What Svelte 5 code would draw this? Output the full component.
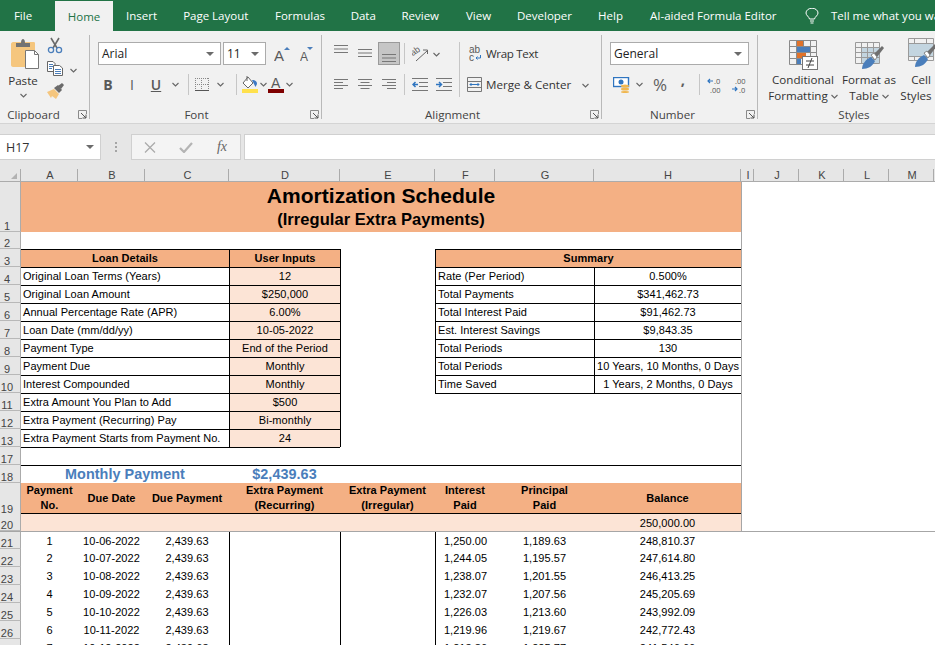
<script lang="ts">
	const tabs = ['File', 'Home', 'Insert', 'Page Layout', 'Formulas', 'Data', 'Review', 'View', 'Developer', 'Help', 'AI-aided Formula Editor'];

	const colHeads = ['A', 'B', 'C', 'D', 'E', 'F', 'G', 'H', 'I', 'J', 'K', 'L', 'M'];

	const loan = [
		['Original Loan Terms (Years)', '12'],
		['Original Loan Amount', '$250,000'],
		['Annual Percentage Rate (APR)', '6.00%'],
		['Loan Date (mm/dd/yy)', '10-05-2022'],
		['Payment Type', 'End of the Period'],
		['Payment Due', 'Monthly'],
		['Interest Compounded', 'Monthly'],
		['Extra Amount You Plan to Add', '$500'],
		['Extra Payment (Recurring) Pay', 'Bi-monthly'],
		['Extra Payment Starts from Payment No.', '24']
	];

	const summary = [
		['Rate (Per Period)', '0.500%'],
		['Total Payments', '$341,462.73'],
		['Total Interest Paid', '$91,462.73'],
		['Est. Interest Savings', '$9,843.35'],
		['Total Periods', '130'],
		['Total Periods', '10 Years, 10 Months, 0 Days'],
		['Time Saved', '1 Years, 2 Months, 0 Days']
	];

	const payments = [
		[1, '10-06-2022', '2,439.63', '1,250.00', '1,189.63', '248,810.37'],
		[2, '10-07-2022', '2,439.63', '1,244.05', '1,195.57', '247,614.80'],
		[3, '10-08-2022', '2,439.63', '1,238.07', '1,201.55', '246,413.25'],
		[4, '10-09-2022', '2,439.63', '1,232.07', '1,207.56', '245,205.69'],
		[5, '10-10-2022', '2,439.63', '1,226.03', '1,213.60', '243,992.09'],
		[6, '10-11-2022', '2,439.63', '1,219.96', '1,219.67', '242,772.43'],
		[7, '10-12-2022', '2,439.63', '1,213.86', '1,225.77', '241,546.66']
	];

	const alignTop = [[0, 14, 3.5], [0, 14, 7], [0, 14, 10.5]];
	const alignMid = [[0, 14, 7.5], [0, 14, 11], [0, 14, 14.5]];
	const alignBot = [[0, 14, 12.5], [0, 14, 16], [0, 14, 19.5]];
	const alignLeft = [[0, 14, 6.5], [0, 9, 9.5], [0, 14, 12.5], [0, 9, 15.5]];
	const alignCenter = [[0, 14, 6.5], [2.5, 11.5, 9.5], [0, 14, 12.5], [2.5, 11.5, 15.5]];
	const alignRight = [[0, 14, 6.5], [5, 14, 9.5], [0, 14, 12.5], [5, 14, 15.5]];
</script>

{#snippet chev()}
	<svg class="chev" width="7" height="5" viewBox="0 0 7 5" fill="none"><path d="M.5 1 3.5 4 6.5 1" stroke="#666" stroke-width="1.1"/></svg>
{/snippet}

{#snippet arrow()}
	<svg width="8" height="4" viewBox="0 0 8 4"><path d="M0 0H8L4 4Z" fill="#6b6b6b"/></svg>
{/snippet}

{#snippet launcher()}
	<svg class="launcher" width="9" height="9" viewBox="0 0 9 9" fill="none">
		<path d="M8.5 4V.5H.5V8.5H4" stroke="#8a8a8a"/>
		<path d="M3 3 8 8M8 4.5V8H4.5" stroke="#555"/>
	</svg>
{/snippet}

{#snippet lines(rows: number[][])}
	<svg width="14" height="23" viewBox="0 0 14 23" stroke="#777">
		{#each rows as r}
			<line x1={r[0]} x2={r[1]} y1={r[2]} y2={r[2]}/>
		{/each}
	</svg>
{/snippet}

{#snippet brush(x: number, y: number)}
	<g transform="translate({x} {y})">
		<path d="M21 16 29 8 31 10 24 19Z" fill="#6f6f6f"/>
		<path d="M18 17 21 15 24 19 22 22Z" fill="#fff" stroke="#6f6f6f" stroke-width=".8"/>
		<path d="M9 31C9 26 13 21 18 19L22 23C20 28 15 31 9 31Z" fill="#4a7ebb"/>
	</g>
{/snippet}

<div class="app">
	<nav class="tabs">
		{#each tabs as tab}
			<span class="tab" class:active={tab === 'Home'}>{tab}</span>
		{/each}
		<span class="tell">
			<svg width="14" height="16" viewBox="0 0 14 16" fill="none" stroke="#fff">
				<path d="M4.5 11C4 8.5 1 7.5 1 5a6 4.8 0 0 1 12 0C13 7.5 10 8.5 9.5 11Z"/>
				<path d="M5 13H9M5.5 15H8.5"/>
			</svg>
			<span>Tell me what you want to do</span>
		</span>
	</nav>

	<div class="ribbon">
		<section class="group clipboard">
			<div class="body clip-body">
				<div class="paste">
					<svg width="30" height="32" viewBox="0 0 30 32">
						<path d="M1 6C1 5 2 4 3 4H24C25 4 25 5 25 6V29H3C2 29 1 28 1 27Z" fill="#f5c67e"/>
						<path d="M6 9V5H11C11 2 12 1 13 1S15 2 15 5H20V9Z" fill="#737373"/>
						<path d="M15.5 12.5H24.5L28.5 16.5V30.5H15.5Z" fill="#fff" stroke="#777"/>
						<path d="M24.5 12.5V16.5H28.5" fill="none" stroke="#777"/>
					</svg>
					<span class="paste-label">Paste</span>
					{@render chev()}
				</div>
				<div class="clip-tools">
					<svg width="16" height="17" viewBox="0 0 16 17" fill="none">
						<path d="M4 1 10 11M12 1 6 11" stroke="#6a6a6a" stroke-width="1.6"/>
						<circle cx="4" cy="13" r="2.6" stroke="#4a7ebb" stroke-width="1.3"/>
						<circle cx="12" cy="13" r="2.6" stroke="#4a7ebb" stroke-width="1.3"/>
					</svg>
					<svg width="16" height="15" viewBox="0 0 16 15" fill="#fff" stroke="#666">
						<path d="M.5.5H6L8 2.5V10.5H.5Z"/>
						<path d="M6.5 4.5H12.5L15.5 7V14.5H6.5Z"/>
						<path d="M2 3.5H6M2 5.5H6M2 7.5H5" stroke="#4a7ebb"/>
						<path d="M8 8.5H14M8 10.5H14M8 12.5H14" stroke="#4a7ebb"/>
					</svg>
					<svg width="17" height="17" viewBox="0 0 17 17">
						<path d="M0 9 7 6 12 11 9 16 5 13 4 15Z" fill="#f5c67e"/>
						<path d="M7 5 11 2 15 7 12 10Z" fill="#6a6a6a"/>
						<path d="M11 3 15 0 17 2 14 6Z" fill="#6a6a6a"/>
					</svg>
				</div>
				<div class="clip-chev">{@render chev()}</div>
			</div>
			<footer class="foot"><span>Clipboard</span>{@render launcher()}</footer>
		</section>
		<div class="rsep"></div>

		<section class="group font">
			<div class="body">
				<div class="font-row1">
					<div class="combo"><span>Arial</span>{@render arrow()}</div>
					<div class="combo"><span>11</span>{@render arrow()}</div>
					<svg class="grow" width="18" height="18" viewBox="0 0 18 18">
						<text x="0" y="16" class="glyph" font-size="15">A</text>
						<path d="M10 5 13 2 16 5Z" fill="#4a7ebb"/>
					</svg>
					<svg class="shrink" width="15" height="18" viewBox="0 0 15 18">
						<text x="0" y="16" class="glyph" font-size="12">A</text>
						<path d="M7 2H13L10 5Z" fill="#4a7ebb"/>
					</svg>
				</div>
				<div class="font-row2">
					<b class="fmt">B</b>
					<i class="fmt">I</i>
					<u class="fmt">U</u>
					{@render chev()}
					<div class="vsep"></div>
					<svg width="14" height="13" viewBox="0 0 14 13" fill="none" stroke="#888" stroke-dasharray="1 1">
						<path d="M.5 0V13M6.5 0V13M13.5 0V13M0 .5H14M0 6.5H14"/>
						<path d="M0 12.5H14" stroke="#555" stroke-dasharray="none"/>
					</svg>
					{@render chev()}
					<div class="vsep"></div>
					<svg width="16" height="17" viewBox="0 0 16 17">
						<path d="M6 1 1 7 6 12 11 7Z" fill="#fff" stroke="#666"/>
						<path d="M5 0V5" stroke="#666"/>
						<path d="M10 4C13 4 15 5 15 8L13.5 11 12 8Z" fill="#3d79c4"/>
						<rect y="13" width="16" height="4" fill="#ffe14d"/>
					</svg>
					{@render chev()}
					<svg width="16" height="17" viewBox="0 0 16 17">
						<text x="3" y="12" class="glyph" font-size="14">A</text>
						<rect y="13" width="16" height="4" fill="#7f0000"/>
					</svg>
					{@render chev()}
				</div>
			</div>
			<footer class="foot"><span>Font</span>{@render launcher()}</footer>
		</section>
		<div class="rsep"></div>

		<section class="group alignment">
			<div class="body align-body">
				<div class="align-grid">
					{@render lines(alignTop)}
					{@render lines(alignMid)}
					<div class="pressed">{@render lines(alignBot)}</div>
					<div class="vsep"></div>
					<svg width="16" height="16" viewBox="0 0 16 16" fill="none">
						<text x="0" y="8" class="glyph" font-size="9" transform="rotate(-35 4 8)">ab</text>
						<path d="M4 15 15 5M11 4H15.5V8" stroke="#666"/>
					</svg>
					<div class="orient-chev">{@render chev()}</div>

					{@render lines(alignLeft)}
					{@render lines(alignCenter)}
					{@render lines(alignRight)}
					<div class="vsep"></div>
					<svg width="16" height="13" viewBox="0 0 16 13" fill="none" stroke="#777">
						<path d="M0 .5H16M7 4.5H16M7 8.5H16M0 12.5H16"/>
						<path d="M6 6.5H1M3.5 4 1 6.5 3.5 9" stroke="#2f75c0" stroke-width="1.5"/>
					</svg>
					<svg width="16" height="13" viewBox="0 0 16 13" fill="none" stroke="#777">
						<path d="M0 .5H16M7 4.5H16M7 8.5H16M0 12.5H16"/>
						<path d="M0 6.5H5M3 4 5.5 6.5 3 9" stroke="#2f75c0" stroke-width="1.5"/>
					</svg>
				</div>
				<div class="tall-sep"></div>
				<div class="wrap-col">
					<div class="wm-row">
						<svg width="15" height="17" viewBox="0 0 15 17" fill="none">
							<text x="2" y="7.5" class="glyph" font-size="10">ab</text>
							<text x="2" y="16" class="glyph" font-size="10">c</text>
							<path d="M13.5 10V13H9M10.5 11.5 9 13 10.5 14.5" stroke="#2f75c0"/>
						</svg>
						<span class="wrap-text">Wrap Text</span>
					</div>
					<div class="wm-row">
						<svg width="15" height="15" viewBox="0 0 15 15" fill="none">
							<path d="M.5.5H14.5V14.5H.5ZM.5 4.5H14.5M.5 10.5H14.5" stroke="#777"/>
							<path d="M3 7.5H12M4.5 6 3 7.5 4.5 9M10.5 6 12 7.5 10.5 9" stroke="#2f75c0"/>
						</svg>
						<span>Merge &amp; Center</span>
						<span class="merge-chev">{@render chev()}</span>
					</div>
				</div>
			</div>
			<footer class="foot"><span>Alignment</span>{@render launcher()}</footer>
		</section>
		<div class="rsep"></div>

		<section class="group number">
			<div class="body">
				<div class="combo general"><span>General</span>{@render arrow()}</div>
				<div class="num-row">
					<svg width="17" height="16" viewBox="0 0 17 16">
						<rect x=".5" y=".5" width="15" height="9" fill="#fff" stroke="#2f75c0" stroke-width="1.4"/>
						<circle cx="8" cy="5" r="2.5" fill="#2f75c0"/>
						<ellipse cx="12" cy="9" rx="4" ry="1.5" fill="#f0b750"/>
						<ellipse cx="12" cy="12" rx="4" ry="1.5" fill="#f0b750"/>
						<ellipse cx="12" cy="15" rx="4" ry="1" fill="#f0b750"/>
					</svg>
					{@render chev()}
					<span class="pct">%</span>
					<b class="comma">,</b>
					<div class="vsep"></div>
					<svg width="16" height="18" viewBox="0 0 16 18">
						<text x="7" y="7.5" class="dec" font-size="7.5">.0</text>
						<text x="3" y="16.5" class="dec" font-size="7.5">.00</text>
						<path d="M6 5H1M3 3 1 5 3 7" fill="none" stroke="#2f75c0" stroke-width="1.2"/>
					</svg>
					<span></span>
					<svg width="16" height="18" viewBox="0 0 16 18">
						<text x="3" y="7.5" class="dec" font-size="7.5">.00</text>
						<text x="7" y="16.5" class="dec" font-size="7.5">.0</text>
						<path d="M0 13H5M3 11 5 13 3 15" fill="none" stroke="#2f75c0" stroke-width="1.2"/>
					</svg>
				</div>
			</div>
			<footer class="foot"><span>Number</span>{@render launcher()}</footer>
		</section>
		<div class="rsep"></div>

		<section class="group styles">
			<div class="body styles-body">
				<div class="big">
					<svg width="32" height="32" viewBox="0 0 32 32">
						<g fill="none" stroke="#8a8a8a">
							<path d="M2.5 2.5H29.5V26.5H2.5ZM2.5 8.5H29.5M2.5 14.5H29.5M2.5 20.5H29.5M9.5 2.5V26.5M16.5 2.5V26.5M23.5 2.5V26.5"/>
						</g>
						<rect x="10" y="3" width="6" height="5" fill="#e0722a"/>
						<rect x="10" y="9" width="13" height="5" fill="#4a7ebb"/>
						<rect x="10" y="15" width="9" height="5" fill="#e0722a"/>
						<rect x="10" y="21" width="4" height="5" fill="#4a7ebb"/>
						<rect x="15.5" y="18.5" width="15" height="13" fill="#fff" stroke="#777"/>
						<path d="M19 23H27M19 27H27M21 30 25 20" stroke="#444" fill="none"/>
					</svg>
					<span class="big-label">Conditional<br/>Formatting {@render chev()}</span>
				</div>
				<div class="big">
					<svg width="32" height="32" viewBox="0 0 32 32">
						<rect x="8" y="9" width="18" height="16" fill="#c3d5e0"/>
						<path d="M2.5 4.5H26.5V25.5H2.5ZM2.5 9.5H26.5M2.5 14.5H26.5M2.5 19.5H26.5M8.5 4.5V25.5M14.5 4.5V25.5M20.5 4.5V25.5" fill="none" stroke="#9a9a9a"/>
						{@render brush(0, 0)}
					</svg>
					<span class="big-label">Format as<br/>Table {@render chev()}</span>
				</div>
				<div class="big">
					<svg width="32" height="32" viewBox="0 0 32 32">
						<rect x="4" y="6" width="24" height="12" fill="#c3d5e0"/>
						<path d="M3.5 .5H28.5V22.5H3.5ZM3.5 5.5H28.5M3.5 18.5H28.5M9.5 .5V5.5M9.5 18.5V22.5M21.5 .5V5.5M21.5 18.5V22.5" fill="none" stroke="#9a9a9a"/>
						{@render brush(1, -2)}
					</svg>
					<span class="big-label">Cell<br/>Styles {@render chev()}</span>
				</div>
			</div>
			<footer class="foot"><span>Styles</span></footer>
		</section>
	</div>

	<div class="formula">
		<div class="namebox"><span>H17</span>{@render arrow()}</div>
		<div class="dots"><i></i><i></i><i></i></div>
		<div class="fx-box">
			<svg width="12" height="11" viewBox="0 0 12 11" fill="none" stroke="#a9a9a9" stroke-width="1.2"><path d="M1 .5 11 10.5M11 .5 1 10.5"/></svg>
			<svg width="14" height="11" viewBox="0 0 14 11" fill="none" stroke="#b4b4b4" stroke-width="2.2"><path d="M1 6 5 10 13 1"/></svg>
			<span class="fx">fx</span>
		</div>
		<div class="fbar"></div>
	</div>

	<div class="sheet">
		<div class="row col-heads">
			<div class="corner"><svg width="6" height="6" viewBox="0 0 6 6"><path d="M6 0V6H0Z" fill="#b2b2b2"/></svg></div>
			{#each colHeads as c}
				<div class="ch">{c}</div>
			{/each}
		</div>

		<div class="row title-row">
			<div class="rh">1</div>
			<div class="c s8 title">
				<strong>Amortization Schedule</strong>
				<strong class="sub">(Irregular Extra Payments)</strong>
			</div>
			<div class="c s6 edge"></div>
		</div>

		<div class="row h17">
			<div class="rh">2</div>
			<div class="c s8"></div>
			<div class="c s6 edge"></div>
		</div>

		<div class="row">
			<div class="rh">3</div>
			<div class="c s3 ctr bold peach bt">Loan Details</div>
			<div class="c ctr bold peach bt bl">User Inputs</div>
			<div class="c bl"></div>
			<div class="c s3 ctr bold peach bt bl">Summary</div>
			<div class="c s6 edge"></div>
		</div>

		{#each loan as item, i}
			<div class="row">
				<div class="rh">{i + 4}</div>
				<div class="c s3 lbl bt">{item[0]}</div>
				<div class="c ctr cream bt bl">{item[1]}</div>
				<div class="c bl"></div>
				{#if summary[i]}
					<div class="c s2 lbl bt bl">{summary[i][0]}</div>
					<div class="c ctr bt bl">{summary[i][1]}</div>
				{:else if i === summary.length}
					<div class="c s3 bt"></div>
				{:else}
					<div class="c s3"></div>
				{/if}
				<div class="c s6 edge"></div>
			</div>
		{/each}

		<div class="row">
			<div class="rh">17</div>
			<div class="c s4 bt"></div>
			<div class="c s4"></div>
			<div class="c s6 edge"></div>
		</div>

		<div class="row">
			<div class="rh">18</div>
			<div class="c s3 ctr mp bt">Monthly Payment</div>
			<div class="c ctr mp bt">$2,439.63</div>
			<div class="c s4 bt"></div>
			<div class="c s6 edge"></div>
		</div>

		<div class="row head-row">
			<div class="rh">19</div>
			<div class="c ctr hd">Payment<br/>No.</div>
			<div class="c ctr hd">Due Date</div>
			<div class="c ctr hd">Due Payment</div>
			<div class="c ctr hd">Extra Payment<br/>(Recurring)</div>
			<div class="c ctr hd">Extra Payment<br/>(Irregular)</div>
			<div class="c ctr hd">Interest<br/>Paid</div>
			<div class="c ctr hd">Principal<br/>Paid</div>
			<div class="c ctr hd">Balance</div>
			<div class="c s6 edge"></div>
		</div>

		<div class="row h17">
			<div class="rh">20</div>
			<div class="c s7 cream"></div>
			<div class="c ctr cream">250,000.00</div>
			<div class="c s6 edge"></div>
		</div>

		<div class="frozen">
			{#each payments as p, i}
				<div class="row">
					<div class="rh">{i + 21}</div>
					<div class="c ctr">{p[0]}</div>
					<div class="c ctr">{p[1]}</div>
					<div class="c ctr">{p[2]}</div>
					<div class="c bl"></div>
					<div class="c bl"></div>
					<div class="c ctr bl">{p[3]}</div>
					<div class="c ctr">{p[4]}</div>
					<div class="c ctr">{p[5]}</div>
					<div class="c s6"></div>
				</div>
			{/each}
		</div>
	</div>
</div>

<style>
	:global(body) {
		margin: 0;
		background: #fff;
	}

	.app {
		width: 935px;
		height: 645px;
		overflow: hidden;
		background: #e6e6e6;
		font-family: "Open Sans", "Noto Sans", sans-serif;
		color: #333;
	}

	/* Tabs */
	.tabs {
		height: 31px;
		background: #217346;
		display: grid;
		grid-template-columns: 46px 9px 58px 57px 91.5px 77px 49.5px 64.5px 52px 80px 52px 153.5px 1fr;
		color: #fff;
		font-size: 11.5px;
		white-space: nowrap;
	}
	.tab {
		display: flex;
		align-items: center;
		justify-content: center;
	}
	.tab:first-child { grid-column: 1; }
	.tab:nth-child(2) { grid-column: 3; }
	.tab.active {
		background: #f1f1f1;
		color: #217346;
		margin-top: 1px;
	}
	.tell {
		display: flex;
		align-items: center;
		gap: 12px;
		padding-left: 15px;
		overflow: hidden;
	}
	.tell svg { flex: none; }

	/* Ribbon */
	.ribbon {
		height: 92px;
		display: flex;
		overflow: hidden;
		background: #f1f1f1;
		border-bottom: 1px solid #d4d4d4;
		font-size: 11.6px;
		white-space: nowrap;
	}
	.rsep {
		flex: none;
		width: 1px;
		height: 84px;
		margin-top: 4px;
		background: #b9b9b9;
	}
	.group {
		flex: none;
		display: flex;
		flex-direction: column;
	}
	.clipboard { width: 89px; }
	.font { width: 231px; }
	.alignment { width: 279px; }
	.number { width: 155px; }
	.styles { width: 192px; }

	.body {
		height: 75px;
		box-sizing: border-box;
		padding-top: 11px;
	}
	.foot {
		height: 17px;
		display: flex;
		align-items: center;
		color: #444;
	}
	.foot span {
		flex: 1;
		text-align: center;
		padding-right: 7px;
	}
	.clipboard .foot span { padding-right: 11px; }
	.number .foot span { padding-right: 3px; }
	.launcher {
		flex: none;
		margin-right: 2px;
	}

	.glyph {
		font-family: "Liberation Sans", sans-serif;
		fill: #595959;
	}
	.dec {
		font-family: "Open Sans", sans-serif;
		fill: #555;
	}
	.chev {
		display: inline-block;
		vertical-align: middle;
	}

	.vsep {
		width: 1px;
		height: 21px;
		background: #c6c6c6;
	}

	/* Clipboard */
	.clip-body {
		padding-top: 0;
		display: grid;
		grid-template-columns: 46px 18px 18px;
	}
	.paste {
		display: flex;
		flex-direction: column;
		align-items: center;
		padding-top: 7px;
	}
	.paste svg:first-child { margin-left: 4px; }
	.paste-label {
		line-height: 21px;
		color: #333;
	}
	.paste .chev { margin-top: 2px; }
	.clip-tools {
		display: grid;
		grid-template-rows: 23px 23px 23px;
		place-items: center;
		padding-top: 3px;
	}
	.clip-chev {
		padding-top: 31px;
		text-align: center;
	}

	/* Font */
	.font-row1 {
		display: grid;
		grid-template-columns: 123px 43px 18px 15px;
		column-gap: 2px;
		height: 23px;
		margin-left: 8px;
		align-items: center;
	}
	.grow { margin-left: 6px; }
	.shrink { margin-left: 12px; }
	.combo {
		box-sizing: border-box;
		height: 23px;
		display: flex;
		align-items: center;
		justify-content: space-between;
		padding: 0 6px 0 3px;
		background: #fff;
		border: 1px solid #ababab;
		font-size: 12px;
		color: #222;
	}
	.font-row2 {
		display: grid;
		grid-template-columns: 24px 24px 24px 14px 12px 16px 20px 12px 16px 10px 16px 10px 16px 10px;
		height: 23px;
		margin: 8px 0 0 6px;
		place-items: center;
	}
	.fmt {
		font: 400 14px "Open Sans", sans-serif;
		color: #595959;
	}
	b.fmt { font-weight: 700; }
	u.fmt { font-weight: 600; }

	/* Alignment */
	.align-body {
		display: flex;
		padding-left: 7px;
	}
	.align-grid {
		display: grid;
		grid-template-columns: 24px 24px 24px 7px 24px 24px;
		grid-template-rows: 23px 23px;
		row-gap: 8px;
		place-items: center;
	}
	.pressed {
		width: 22px;
		height: 23px;
		box-sizing: border-box;
		display: flex;
		justify-content: center;
		background: #c6c6c6;
		border: 1px solid #9a9a9a;
	}
	.pressed svg { margin-top: -1px; }
	.orient-chev {
		justify-self: start;
		margin-left: 1px;
	}
	.tall-sep {
		width: 1px;
		height: 55px;
		margin: 0 7px 0 3px;
		background: #c6c6c6;
	}
	.wrap-col {
		display: grid;
		grid-template-rows: 23px 23px;
		row-gap: 8px;
	}
	.wm-row {
		display: flex;
		align-items: center;
		gap: 4px;
	}
	.wrap-text { letter-spacing: -0.35px; }
	.merge-chev { margin-left: 7px; }

	/* Number */
	.general {
		width: 139px;
		margin-left: 8px;
		padding-left: 3px;
	}
	.num-row {
		display: grid;
		grid-template-columns: 22px 14px 28px 18px 15px 16px 9px 16px;
		height: 23px;
		margin: 8px 0 0 8px;
		place-items: center;
	}
	.pct {
		font-size: 17px;
		color: #5f5f5f;
	}
	.comma {
		font-size: 15px;
		color: #5f5f5f;
		line-height: 1;
		margin-top: -10px;
	}

	/* Styles */
	.styles-body {
		padding: 7px 0 0 7px;
		display: grid;
		grid-template-columns: 76px 56px 48px;
	}
	.big {
		display: flex;
		flex-direction: column;
		align-items: center;
	}
	.big-label {
		text-align: center;
		line-height: 16px;
		margin-top: 2px;
	}
	.styles .foot span { padding-right: 0; }

	/* Formula bar */
	.formula {
		display: flex;
		align-items: stretch;
		height: 26px;
		margin: 10px 0 9px;
	}
	.namebox {
		box-sizing: border-box;
		width: 101px;
		display: flex;
		align-items: center;
		justify-content: space-between;
		padding: 0 6px;
		background: #fff;
		border: 1px solid #d0d0d0;
		border-left: 0;
		font-size: 12.5px;
		color: #333;
	}
	.dots {
		width: 30px;
		display: flex;
		flex-direction: column;
		align-items: center;
		justify-content: center;
		gap: 2px;
	}
	.dots i {
		width: 2px;
		height: 2px;
		background: #a5a5a5;
	}
	.fx-box {
		box-sizing: border-box;
		width: 110px;
		display: grid;
		grid-template-columns: 36px 36px 36px;
		place-items: center;
		background: #f4f4f4;
		border: 1px solid #d0d0d0;
	}
	.fx {
		font: italic 14px "Liberation Serif", serif;
		color: #666;
	}
	.fbar {
		flex: 1;
		margin-left: 3px;
		background: #fff;
		border: 1px solid #d0d0d0;
		border-right: 0;
	}

	/* Sheet */
	.sheet {
		font: 11px "Liberation Sans", Arial, sans-serif;
		color: #000;
		letter-spacing: 0.05px;
	}
	.row {
		display: grid;
		grid-template-columns: 21px 57px 67px 84px 111px 95px 60px 99px 147px 13px 45px 45px 45px 45px 1px;
		height: 18px;
		background: #fff;
	}
	.col-heads {
		height: 13px;
		box-sizing: border-box;
		background: #e6e6e6;
		border-bottom: 1px solid #ababab;
		color: #444;
	}
	.corner {
		display: flex;
		align-items: flex-end;
		justify-content: flex-end;
		padding: 0 3px 2px 0;
		border-right: 1px solid #ababab;
	}
	.ch {
		display: flex;
		align-items: center;
		justify-content: center;
		box-sizing: border-box;
		border-right: 1px solid #ababab;
		padding: 1px 0 0 2px;
		line-height: 11px;
	}
	.title-row { height: 50px; }
	.h17 { height: 17px; }
	.head-row { height: 31px; }

	.rh {
		box-sizing: border-box;
		display: flex;
		align-items: flex-end;
		justify-content: center;
		padding-right: 6px;
		background: #e6e6e6;
		border-right: 1px solid #ababab;
		border-bottom: 1px solid #b8b8b8;
		color: #444;
		line-height: 10px;
	}

	.c {
		box-sizing: border-box;
		display: flex;
		align-items: center;
		white-space: nowrap;
		min-width: 0;
	}
	.s2 { grid-column: span 2; }
	.s3 { grid-column: span 3; }
	.s4 { grid-column: span 4; }
	.s6 { grid-column: span 6; }
	.s7 { grid-column: span 7; }
	.s8 { grid-column: span 8; }

	.ctr {
		justify-content: center;
		text-align: center;
	}
	.lbl { padding-left: 2px; }
	.bold { font-weight: 700; }
	.peach { background: #f4b084; }
	.cream { background: #fce4d6; }
	.bt {
		border-top: 1px solid #000;
		padding-bottom: 1px;
	}
	.bl { border-left: 1px solid #000; }
	.edge { border-left: 1px solid #a6a6a6; }

	.title {
		flex-direction: column;
		justify-content: center;
		padding-bottom: 1px;
		background: #f4b084;
		color: #000;
	}
	.title strong {
		font-size: 21px;
		line-height: 26px;
	}
	.title .sub {
		font-size: 16.5px;
		line-height: 21px;
	}

	.mp {
		font-size: 14.4px;
		font-weight: 700;
		color: #4a7ebb;
	}
	.hd {
		font-weight: 700;
		line-height: 15px;
		background: #f4b084;
		border-bottom: 2px solid #000;
	}

	.frozen { border-top: 1px solid #a6a6a6; }
	.frozen .row:first-child { height: 17px; }
</style>
